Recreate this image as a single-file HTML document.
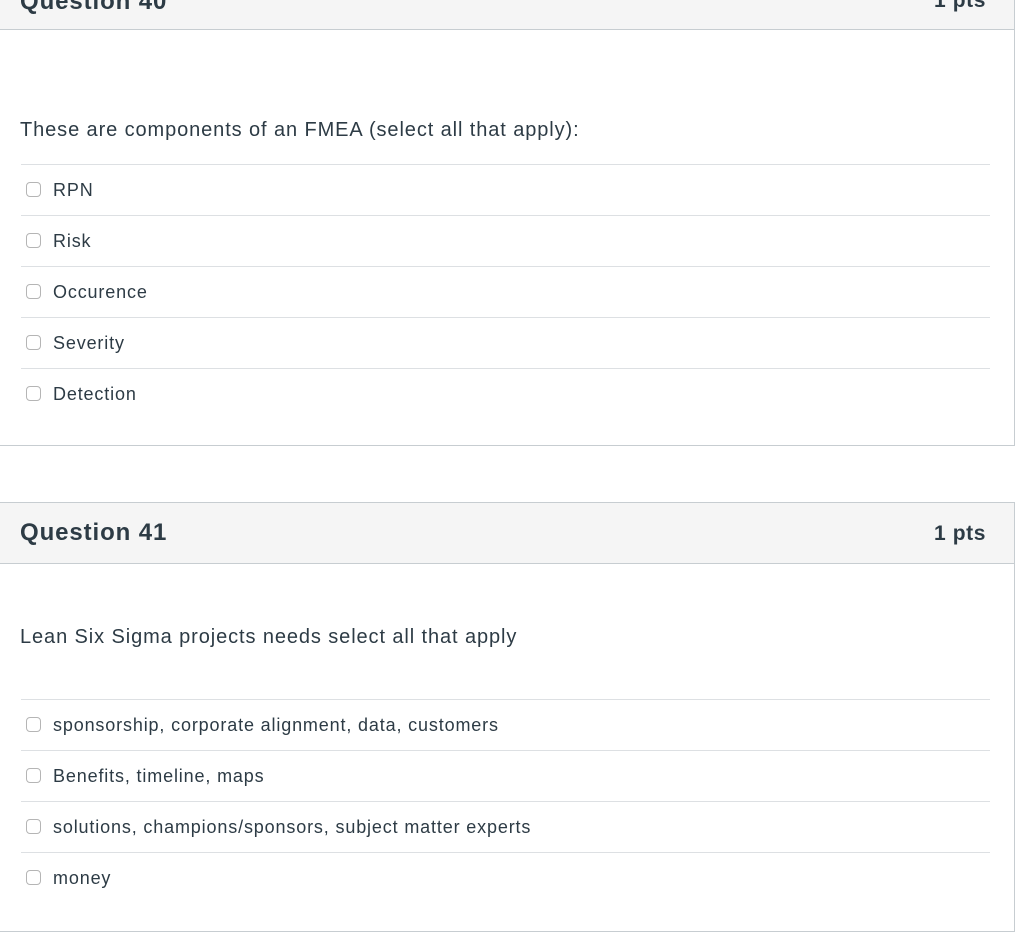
<!DOCTYPE html><html><head><style>
body{margin:0;background:#fff;font-family:"Liberation Sans",sans-serif;color:#2d3b45;width:1024px;height:942px;overflow:hidden;position:relative}
.p{position:absolute;left:-2px;width:1016px;border:1px solid #c7cdd1;border-left:none}
.h{position:absolute;left:0;right:0;top:0;background:#f5f5f5;border-bottom:1px solid #c7cdd1}
.t{position:absolute;left:22px;font-weight:bold;font-size:24px;letter-spacing:0.9px}
.pts{position:absolute;right:28px;font-weight:bold;font-size:21px;letter-spacing:0.6px}
.q{position:absolute;left:20px;font-size:20px;line-height:24px;letter-spacing:0.9px}
.r{position:absolute;left:21px;width:969px;height:51px;border-top:1px solid #dde0e3;font-size:18px;line-height:50px;letter-spacing:0.85px}
.cb{position:absolute;left:5px;top:17px;width:13px;height:13px;border:1px solid #b5b5b5;border-radius:4px;background:#fff}
.r span{position:absolute;left:32px}
</style></head><body>
<div class="p" style="top:-20px;height:464px">
<div class="h" style="height:48px"><div class="t" style="top:7px">Question 40</div><div class="pts" style="top:8px">1 pts</div></div>
</div>
<div class="q" style="top:118px">These are components of an FMEA (select all that apply):</div>
<div class="r" style="top:164px"><div class="cb"></div><span>RPN</span></div>
<div class="r" style="top:215px"><div class="cb"></div><span>Risk</span></div>
<div class="r" style="top:266px"><div class="cb"></div><span>Occurence</span></div>
<div class="r" style="top:317px"><div class="cb"></div><span>Severity</span></div>
<div class="r" style="top:368px"><div class="cb"></div><span>Detection</span></div>

<div class="p" style="top:502px;height:428px">
<div class="h" style="height:60px"><div class="t" style="top:16px">Question 41</div><div class="pts" style="top:19px">1 pts</div></div>
</div>
<div class="q" style="top:625px">Lean Six Sigma projects needs select all that apply</div>
<div class="r" style="top:699px"><div class="cb"></div><span>sponsorship, corporate alignment, data, customers</span></div>
<div class="r" style="top:750px"><div class="cb"></div><span>Benefits, timeline, maps</span></div>
<div class="r" style="top:801px"><div class="cb"></div><span>solutions, champions/sponsors, subject matter experts</span></div>
<div class="r" style="top:852px"><div class="cb"></div><span>money</span></div>
</body></html>
